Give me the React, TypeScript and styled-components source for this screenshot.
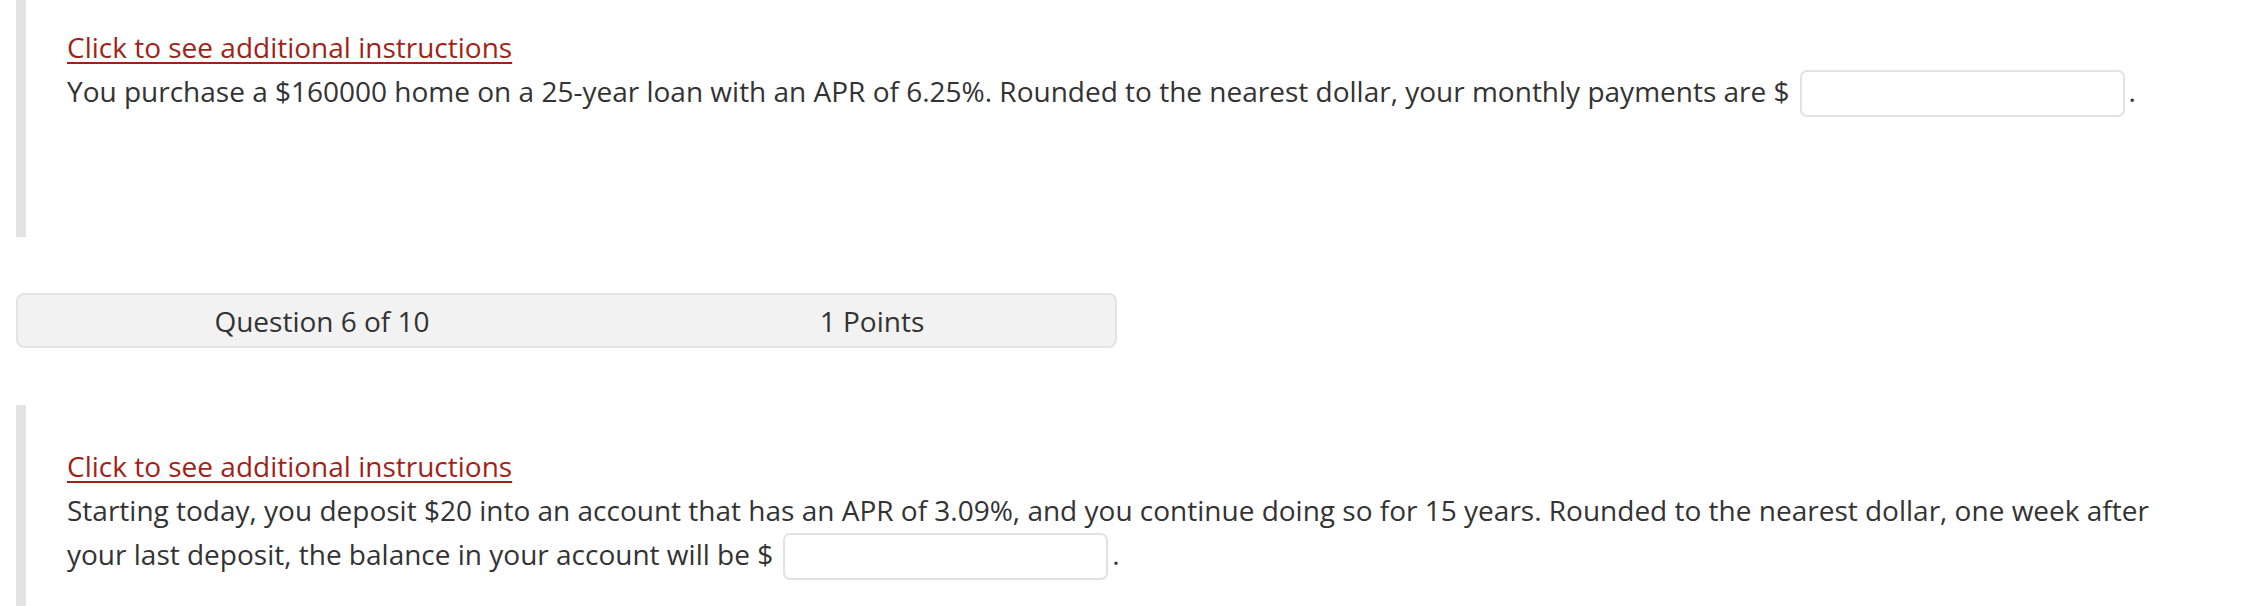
import React from "react";
import styled, { createGlobalStyle } from "styled-components";

const GlobalStyle = createGlobalStyle`
  html, body {
    margin: 0;
    padding: 0;
    background: #ffffff;
  }
  body {
    font-family: "Open Sans", "Noto Sans", sans-serif;
    font-size: 28px;
    line-height: 44px;
    color: #333333;
  }
`;

const Page = styled.div`
  display: flex;
  flex-direction: column;
  width: 2242px;
`;

const QuestionBlock = styled.section<{ $top: number; $bottom: number; $gap: number }>`
  margin: ${(p) => p.$gap}px 0 0 16px;
  border-left: 10px solid #e2e3e5;
  padding: ${(p) => p.$top}px 57px ${(p) => p.$bottom}px 41px;
`;

const InstructionsLink = styled.a`
  display: block;
  width: max-content;
  color: #a31f1a;
  text-decoration: underline;
  text-decoration-thickness: 2px;
  text-underline-offset: 4px;
  cursor: pointer;
`;

const Prompt = styled.div`
  margin: 0;
`;

const AnswerInput = styled.input`
  box-sizing: border-box;
  width: 325px;
  height: 47px;
  margin: -8px 4px -6px 10px;
  padding: 0 12px;
  border: 2px solid #e2e2e2;
  border-radius: 7px;
  background: #ffffff;
  font: inherit;
  vertical-align: middle;
  outline: none;
`;

const QuestionHeader = styled.header`
  box-sizing: border-box;
  margin: 56px 0 0 16px;
  width: 1101px;
  height: 55px;
  display: grid;
  grid-template-columns: 550px 550px;
  align-items: center;
  padding-left: 29px;
  background: #f2f2f2;
  border: 2px solid #e3e3e3;
  border-radius: 8px;
`;

const HeaderCell = styled.span`
  text-align: center;
  white-space: nowrap;
`;

export default function App() {
  return (
    <>
      <GlobalStyle />
      <Page>
        <QuestionBlock $top={25} $bottom={124} $gap={0}>
          <InstructionsLink>Click to see additional instructions</InstructionsLink>
          <Prompt>
            You purchase a $160000 home on a 25-year loan with an APR of 6.25%. Rounded to the nearest dollar, your
            monthly payments are $<AnswerInput type="text" />.
          </Prompt>
        </QuestionBlock>
        <QuestionHeader>
          <HeaderCell>Question 6 of 10</HeaderCell>
          <HeaderCell>1 Points</HeaderCell>
        </QuestionHeader>
        <QuestionBlock $top={39} $bottom={40} $gap={57}>
          <InstructionsLink>Click to see additional instructions</InstructionsLink>
          <Prompt>
            Starting today, you deposit $20 into an account that has an APR of 3.09%, and you continue doing so for 15
            years. Rounded to the nearest dollar, one week after your last deposit, the balance in your account will be
            $<AnswerInput type="text" />.
          </Prompt>
        </QuestionBlock>
      </Page>
    </>
  );
}
